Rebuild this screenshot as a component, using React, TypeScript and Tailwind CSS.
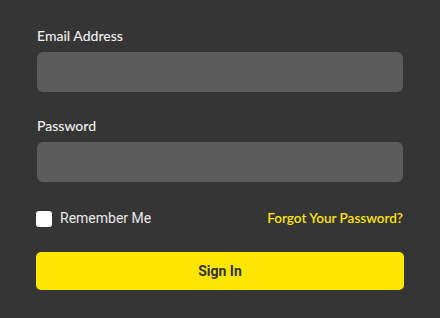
import React from 'react';

export default function App() {
  return (
    <div className="min-h-screen bg-[#353535] font-['Lato',sans-serif]">
      <form className="flex flex-col px-[37px] pt-[27px]">
        <label className="-mt-px mb-px text-[14px] leading-5 font-medium text-[#f0f0f0]">Email Address</label>
        <input type="email" className="mt-[5px] h-10 w-full rounded-md bg-[#5b5b5b] outline-none" />

        <label className="mt-[24px] mb-px text-[14px] leading-5 font-medium text-[#f0f0f0]">Password</label>
        <input type="password" className="mt-[5px] h-10 w-full rounded-md bg-[#5b5b5b] outline-none" />

        <div className="mt-[26px] flex items-center justify-between">
          <label className="flex items-center gap-2">
            <span className="-ml-px h-4 w-4 rounded-[3px] bg-white" />
            <span className="font-['Roboto',sans-serif] text-[14px] text-[#e8e8e8]">Remember Me</span>
          </label>
          <a href="#" className="text-[13.5px] font-semibold text-[#ffe600]">Forgot Your Password?</a>
        </div>

        <button type="button" className="mt-[23px] h-[38px] -mx-px rounded-[5px] bg-[#ffe600] font-['Roboto',sans-serif] text-[14px] font-bold text-[#333]">
          Sign In
        </button>
      </form>
    </div>
  );
}
